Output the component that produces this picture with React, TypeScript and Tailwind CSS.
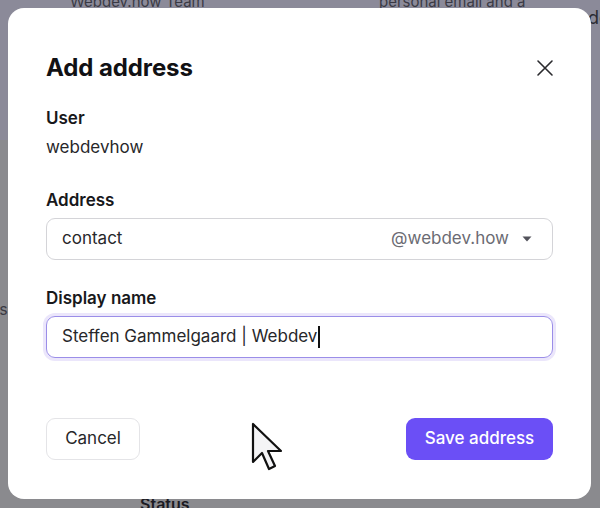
import React from "react";

export default function App() {
  return (
    <div
      className="relative w-[600px] h-[508px] overflow-hidden bg-[#8a8a8e]"
      style={{ fontFamily: "Inter, 'Noto Sans', sans-serif" }}
    >
      {/* dimmed page behind */}
      <div className="h-[140px] bg-[#8b8a99]" />
      <div className="absolute left-[70px] top-[-9px] text-[15px] text-[#3a3a44] whitespace-nowrap">
        Webdev.how Team <span className="ml-[170px]">personal email and  a</span>
      </div>
      <div className="absolute left-[588px] top-[4px] text-[18px] text-[#2a2a33]">de</div>
      <div className="absolute left-[-10px] top-[297px] text-[16px] text-[#3a3a44]">es</div>
      <div className="absolute left-[140px] top-[492px] text-[16px] font-semibold text-[#1a1a22]">Status</div>

      {/* modal */}
      <div className="absolute left-[8px] top-[8px] w-[583px] h-[491px] rounded-[16px] bg-white px-[38px] pt-[44px]">
        <div className="flex items-center justify-between h-[32px]">
          <h2 className="text-[24px] leading-[32px] font-bold text-[#111114] tracking-[-0.1px]">Add address</h2>
          <svg width="18" height="18" viewBox="0 0 18 18" className="mr-[-1px]">
            <path d="M2 2 L16 16 M16 2 L2 16" stroke="#2a2a2e" strokeWidth="1.6" strokeLinecap="round" />
          </svg>
        </div>

        <div className="mt-[22px] text-[17px] leading-[24px] font-semibold text-[#18181b]">User</div>
        <div className="mt-[5px] text-[17px] leading-[24px] text-[#27272a]">webdevhow</div>

        <div className="mt-[29px] text-[17px] leading-[24px] font-semibold text-[#18181b]">Address</div>
        <div className="mt-[6px] h-[42px] flex items-center rounded-[9px] border border-[#d4d4d8] pl-[15px] pr-[20px]">
          <span className="flex-1 text-[17px] text-[#27272a]">contact</span>
          <span className="text-[17px] text-[#6b6b73]">@webdev.how</span>
          <svg width="10" height="6" viewBox="0 0 10 6" className="ml-[13px]">
            <path d="M0.5 0.5 L9.5 0.5 L5 5.5 Z" fill="#52525b" />
          </svg>
        </div>

        <div className="mt-[26px] text-[17px] leading-[24px] font-semibold text-[#18181b]">Display name</div>
        <div className="mt-[6px] h-[42px] flex items-center rounded-[9px] border border-[#9b8ee8] shadow-[0_0_0_3px_#ebe6fb] pl-[15px]">
          <span className="text-[17px] text-[#27272a] whitespace-pre">Steffen Gammelgaard | Webdev</span>
          <span className="w-[1.5px] h-[22px] bg-[#111] ml-[1px]" />
        </div>

        <div className="mt-[60px] flex items-center justify-between">
          <div className="h-[42px] w-[94px] flex items-center justify-center rounded-[9px] border border-[#e4e4e7] text-[17px] text-[#27272a]">
            Cancel
          </div>
          <div className="h-[42px] w-[147px] flex items-center justify-center rounded-[9px] bg-[#6b4ff6] text-[17px] font-medium text-white">
            Save address
          </div>
        </div>
      </div>

      {/* mouse pointer */}
      <svg
        className="absolute left-[251px] top-[422px]"
        width="34"
        height="52"
        viewBox="0 0 34 52"
      >
        <path
          d="M2 2 L2 40 L11 31 L18 47 L24 44 L17 29 L30 29 Z"
          fill="#f4f4f6"
          stroke="#111"
          strokeWidth="2.2"
          strokeLinejoin="round"
        />
      </svg>
    </div>
  );
}
